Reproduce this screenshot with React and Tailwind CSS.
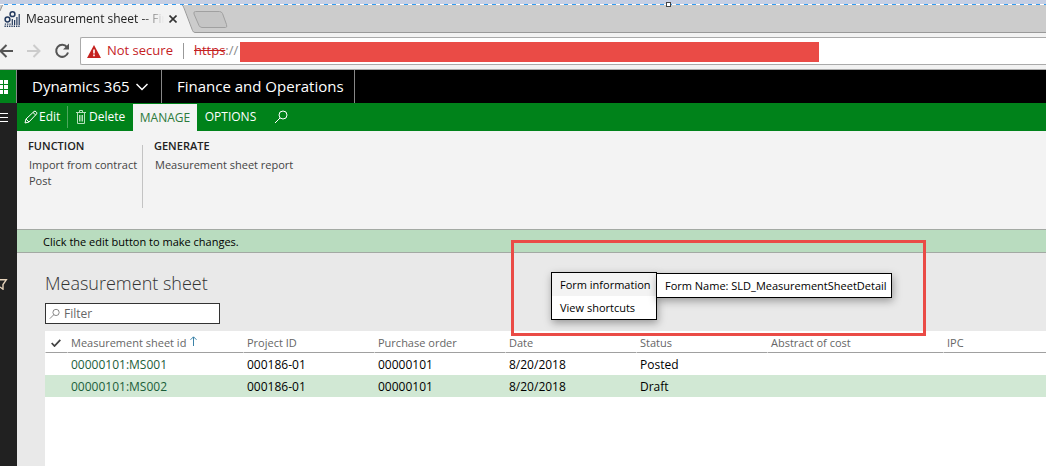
// Measurement sheet list page, shown inside a browser window.
// The right-click menu is open and a red frame marks it.

const rows = [
  {
    id: "00000101:MS001",
    project: "000186-01",
    order: "00000101",
    date: "8/20/2018",
    status: "Posted",
  },
  {
    id: "00000101:MS002",
    project: "000186-01",
    order: "00000101",
    date: "8/20/2018",
    status: "Draft",
    selected: true,
  },
];

// ICONS

const SearchIcon = ({ className }) => (
  <svg viewBox="0 0 14 14" fill="none" stroke="currentColor" className={className}>
    <circle cx="9" cy="5" r="4" />
    <path d="M6 8 1 13" />
  </svg>
);

const PencilIcon = () => (
  <svg viewBox="0 0 14 14" fill="none" stroke="currentColor" className="h-[14px] w-[14px]">
    <path d="M1 13l1-4L10 1.5q1-.8 2 .2l.5.5q.8 1 0 1.8L5 12l-4 1zM9 2.5 11.7 5M2 9l3 3" />
  </svg>
);

const TrashIcon = () => (
  <svg viewBox="0 0 10 14" fill="none" stroke="#b5e0bd" className="h-[14px] w-[10px]">
    <path d="M0 2.5h10M3.5 2.5v-2h3v2M1.5 2.5v11h7v-11M3.5 5v6.5M5 5v6.5M6.5 5v6.5" />
  </svg>
);

const AppIcon = () => (
  <svg viewBox="0 0 16 16" fill="none" stroke="#243a5e" className="h-4 w-4 shrink-0">
    <circle cx="3.5" cy="8.5" r="2.4" strokeWidth="1.5" />
    <circle cx="8.5" cy="3.2" r="2.4" strokeWidth="1.5" />
    <path d="M10.6 9v5M12.9 6v8M15.2 3v11" strokeWidth="1.2" />
    <path d="M8.3 8v6" strokeWidth="1.2" />
    <path d="M.5 15.2H16" strokeWidth="1.4" strokeDasharray="1.3 1" />
    <path d="M.8 13.2H7" strokeWidth="1.2" strokeDasharray="1.3 1" />
  </svg>
);

const ArrowIcon = ({ className }) => (
  <svg viewBox="0 0 14 14" fill="none" stroke="currentColor" strokeWidth="2" className={className}>
    <path d="M14 7H2M7.5 1 1.5 7l6 6" />
  </svg>
);

// BROWSER

const BrowserTabs = () => (
  <div className="bg-[#ccc]">
    <div className="h-1 bg-[#c6cfe3]" />
    <div className="relative h-px bg-[repeating-linear-gradient(90deg,#fff_0px,#fff_4px,#3399ee_4px,#3399ee_8px)]">
      <span className="absolute left-[666px] -top-[2px] h-[5px] w-[5px] border border-[#444] bg-white" />
    </div>
    <div className="flex h-7">
      <svg viewBox="0 0 4 28" className="h-7 w-1">
        <path d="M0 6 3 0h1v28H0z" fill="#f2f2f2" />
        <path d="M0 6 2.5 0" stroke="#999" />
      </svg>
      <div className="flex w-[178px] items-center bg-[#f2f2f2]">
        <AppIcon />
        <span className="ml-[6px] w-[142px] text-[12px] whitespace-nowrap text-[#222] [mask-image:linear-gradient(90deg,#000_115px,transparent_138px)]">
          Measurement sheet -- Fir
        </span>
        <button aria-label="Close tab" className="ml-px">
          <svg viewBox="0 0 8 8" stroke="#333" strokeWidth="1.6" className="h-2 w-2">
            <path d="M.5.5l7 7M7.5.5l-7 7" />
          </svg>
        </button>
      </div>
      <svg viewBox="0 0 13 28" className="h-7 w-[13px]">
        <path d="M0 0h1l1 2 9 24 2 1.5v.5H0z" fill="#f2f2f2" />
        <path d="M0 0q1 0 2 3l8.5 22.5q.8 2 2.5 2" fill="none" stroke="#999" />
      </svg>
      <div className="flex-1 border-b border-[#999]">
        <button aria-label="New tab" className="-ml-[2px] mt-[6px] block">
          <svg viewBox="0 0 35 17" fill="#c5c5c5" stroke="#a0a0a0" className="h-[17px] w-[35px]">
            <path d="M2.5.5h24q2 0 3 2l4 11q1 3-1 3H9q-2 0-3-2L1 3Q.3.5 2.5.5z" />
          </svg>
        </button>
      </div>
    </div>
  </div>
);

const AddressBar = () => (
  <div className="flex h-[37px] items-center border-b border-[#aaa] bg-[#f2f2f2]">
    <button aria-label="Back" className="-ml-px">
      <ArrowIcon className="h-[14px] w-[14px] text-[#555]" />
    </button>
    <button aria-label="Forward" className="ml-[14px]">
      <ArrowIcon className="h-[14px] w-[14px] rotate-180 text-[#ccc]" />
    </button>
    <button aria-label="Reload" className="ml-[13px]">
      <svg viewBox="0 0 16 16" fill="none" stroke="#555" strokeWidth="2" className="h-4 w-4">
        <path d="M13 4.2A6 6 0 1 0 14 9.5" />
        <path d="M15 .5v6H9z" fill="#555" stroke="none" />
      </svg>
    </button>
    <div className="relative ml-[10px] flex h-7 flex-1 items-center rounded-l-[2px] border border-r-0 border-[#aaa] bg-white pl-[6px] text-[13px]">
      <svg viewBox="0 0 14 13" className="h-[13px] w-[14px]">
        <path d="M7 0l7 13H0z" fill="#c5221f" />
        <path d="M7 4.5v4M7 9.5v1.7" stroke="#fff" strokeWidth="1.6" />
      </svg>
      <span className="ml-[6px] text-[#c5221f]">Not secure</span>
      <span className="mx-[10px] h-4 w-px bg-[#999]" />
      <label htmlFor="url" className="text-[#c5221f] line-through">
        https
      </label>
      <input id="url" defaultValue="://" className="min-w-0 flex-1 text-[#888] outline-none" />
      <span className="absolute top-1 left-[159px] h-5 w-[579px] bg-[#ea4b46]" />
    </div>
  </div>
);

// DYNAMICS SHELL

const TopNav = () => (
  <header className="flex h-[33px] bg-black text-[15px] text-white">
    <button aria-label="Apps" className="w-[17px] border-r border-[#888] bg-[#00821a]">
      <svg viewBox="0 0 8 14" fill="#fff" className="h-[14px] w-2">
        <path d="M0 0h3v4H0zM4 0h4v4H4zM0 5h3v4H0zM4 5h4v4H4zM0 10h3v4H0zM4 10h4v4H4z" />
      </svg>
    </button>
    <button className="flex w-[145px] items-center border-r border-[#888] pl-[15px]">
      Dynamics 365
      <svg viewBox="0 0 12 8" fill="none" stroke="#fff" strokeWidth="1.5" className="ml-[6px] h-2 w-3">
        <path d="M.5 1 6 6.5 11.5 1" />
      </svg>
    </button>
    <div className="flex w-[193px] items-center border-r border-[#888] pl-[15px]">
      Finance and Operations
    </div>
  </header>
);

const SideRail = () => (
  <aside className="w-[17px] shrink-0 bg-[#212121] text-white">
    <button aria-label="Menu" className="mt-[10px] block">
      <svg viewBox="0 0 8 9" stroke="#fff" className="h-[9px] w-2">
        <path d="M0 .5h8M0 4.5h8M0 8.5h8" />
      </svg>
    </button>
    <button aria-label="Filters" className="mt-[157px] block">
      <svg viewBox="0 0 8 11" fill="none" stroke="#e6d3bb" className="h-[11px] w-2">
        <path d="M0 .8h6.3L3 5.5v4.7L0 8" strokeWidth="1.4" />
      </svg>
    </button>
  </aside>
);

const ActionPane = () => (
  <>
    <nav className="flex h-7 items-center bg-[#00821a] text-[12px] text-white">
      <button className="flex w-[50px] items-center gap-px pl-[7px]">
        <PencilIcon />
        Edit
      </button>
      <span className="h-[22px] w-px bg-[#4da75e]" />
      <button className="flex w-[65px] items-center gap-[3px] pl-2">
        <TrashIcon />
        Delete
      </button>
      <button className="mt-px h-[27px] w-16 bg-[#f3f3f3] text-[#2b7a3b]">MANAGE</button>
      <button className="h-[27px] w-[67px]">OPTIONS</button>
      <button aria-label="Search" className="ml-[10px]">
        <SearchIcon className="h-[14px] w-[14px]" />
      </button>
    </nav>

    <div className="flex h-[98px] bg-[#f3f3f3] pt-2 pl-[11px] text-[11px] leading-4 text-[#444]">
      <div className="w-[114px]">
        <h2 className="mb-1 leading-[14px] font-semibold text-[#222]">FUNCTION</h2>
        <button className="block pl-px">Import from contract</button>
        <button className="block pl-px">Post</button>
      </div>
      <div className="mt-[6px] h-[63px] w-px bg-[#c3c3c3]" />
      <div className="pl-[11px]">
        <h2 className="mb-1 leading-[14px] font-semibold text-[#222]">GENERATE</h2>
        <button className="block pl-px">Measurement sheet report</button>
      </div>
    </div>
  </>
);

const SheetGrid = () => (
  <table className="w-full table-fixed border-separate border-spacing-0 text-left text-[12px] leading-4">
    <colgroup>
      <col className="w-[22px]" />
      <col className="w-[176px]" />
      <col className="w-[131px]" />
      <col className="w-[131px]" />
      <col className="w-[131px]" />
      <col className="w-[131px]" />
      <col className="w-[176px]" />
      <col />
    </colgroup>
    <thead>
      <tr className="h-[22px] text-[11px] text-[#666] [&>th]:border-b [&>th]:border-l [&>th]:border-b-[#a0a0a0] [&>th]:border-l-white [&>th]:p-0 [&>th]:pt-[2px] [&>th]:pl-[3px] [&>th]:font-normal">
        <th aria-label="Selected">
          <svg viewBox="0 0 10 8" fill="none" stroke="#444" strokeWidth="1.8" className="ml-[2px] h-2 w-[10px]">
            <path d="M.7 4 3.5 7 9.3.8" />
          </svg>
        </th>
        <th>
          <span className="flex items-center gap-1">
            Measurement sheet id
            <svg viewBox="0 0 7 10" fill="none" stroke="#3b82a8" className="-mt-[3px] h-[10px] w-[7px]">
              <path d="M3.5 10V1M.5 3.8l3-3 3 3" />
            </svg>
          </span>
        </th>
        <th>Project ID</th>
        <th>Purchase order</th>
        <th>Date</th>
        <th>Status</th>
        <th>Abstract of cost</th>
        <th>IPC</th>
      </tr>
    </thead>
    <tbody className="text-black">
      {rows.map((row) => (
        <tr
          key={row.id}
          className={`h-[22px] [&>td]:p-0 [&>td]:pt-[2px] [&>td]:pl-1 ${row.selected ? "bg-[#d1e8d4]" : "bg-white"}`}
        >
          <td />
          <td>
            <a href="#sheet" className="text-[#1b5e3a]">
              {row.id}
            </a>
          </td>
          <td>{row.project}</td>
          <td>{row.order}</td>
          <td>{row.date}</td>
          <td>{row.status}</td>
          <td />
          <td />
        </tr>
      ))}
    </tbody>
  </table>
);

// Right-click menu with its flyout, inside the red marker frame
const ContextMenu = () => (
  <div className="absolute top-[240px] left-[511px] h-24 w-[415px] border-[3px] border-[#ea4b46] text-[11px] text-black">
    <div className="absolute top-[29px] left-[37px] w-[106px] border border-black bg-white shadow-[1px_3px_8px_rgba(0,0,0,0.35)]">
      <button className="block h-[23px] w-full bg-[#f3f3f3] pt-[2px] pl-2 text-left">
        Form information
      </button>
      <button className="block h-[23px] w-full pt-[2px] pl-2 text-left">View shortcuts</button>
    </div>
    <div className="absolute top-[30px] left-[142px] flex h-[25px] w-max items-center border border-black bg-white pt-px pr-1 pl-2 whitespace-nowrap shadow-[1px_3px_8px_rgba(0,0,0,0.35)]">
      Form Name: SLD_MeasurementSheetDetail
    </div>
  </div>
);

const App = () => {
  return (
    <div className="relative flex min-h-screen flex-col overflow-hidden bg-[#e9e9e9] font-['Open_Sans','Noto_Sans',sans-serif]">
      <BrowserTabs />
      <AddressBar />
      <TopNav />

      <div className="flex flex-1">
        <SideRail />
        <main className="flex min-w-0 flex-1 flex-col">
          <ActionPane />
          <p className="flex h-6 items-center border-y border-[#a3a9a3] bg-[#b9dcbf] pt-[2px] pl-[26px] text-[11px] text-black">
            Click the edit button to make changes.
          </p>

          <div className="flex flex-1 flex-col pt-4 pl-7">
            <h1 className="text-[18px] leading-7 font-light text-[#333]">Measurement sheet</h1>
            <label className="mt-[6px] flex h-[21px] w-[175px] items-center gap-1 border border-[#333] bg-white pl-[3px] text-[#666]">
              <SearchIcon className="h-3 w-3" />
              <input
                aria-label="Filter"
                placeholder="Filter"
                className="w-full text-[12px] outline-none placeholder:text-[#666]"
              />
            </label>
            <div className="mt-[7px] flex-1 bg-white">
              <SheetGrid />
            </div>
          </div>
        </main>
      </div>

      <ContextMenu />
    </div>
  );
};

export default App;
